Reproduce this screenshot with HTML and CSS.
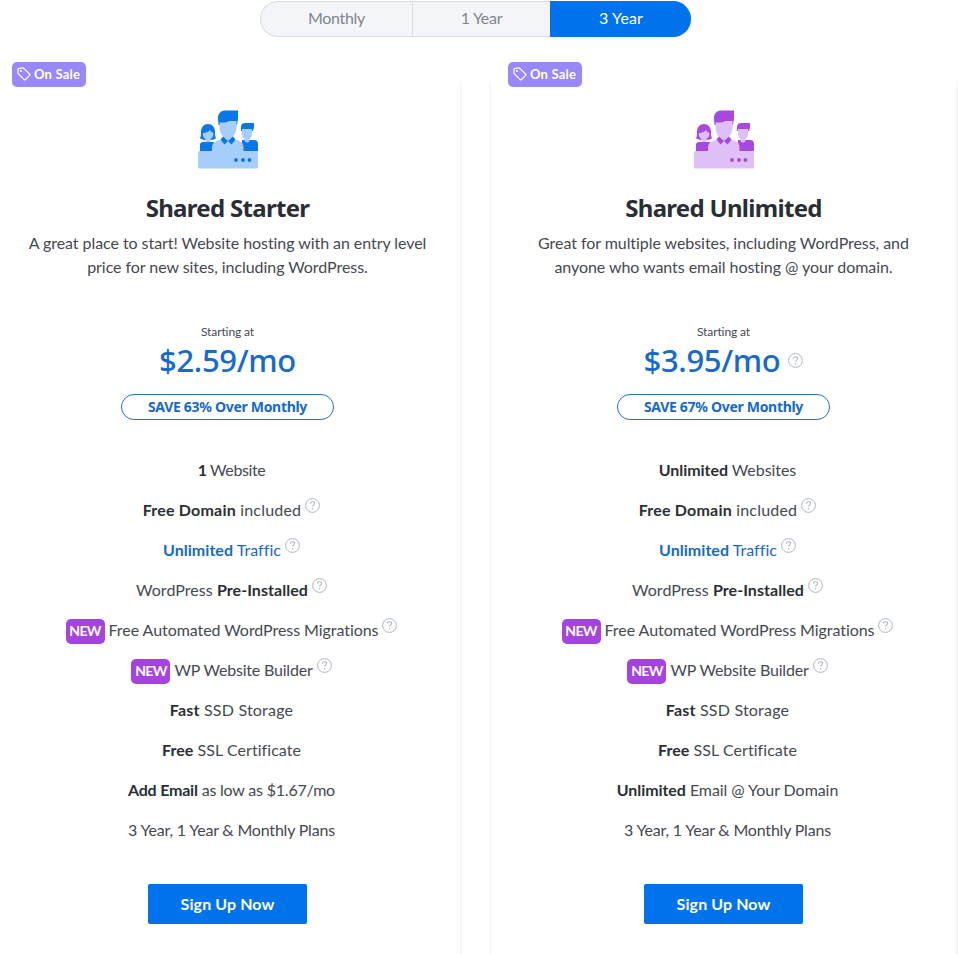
FILE: index.html
```html
<!DOCTYPE html>
<html lang="en">
<head>
    <meta charset="UTF-8">
    <meta name="viewport" content="width=device-width, initial-scale=1.0">
    <title>Shared Hosting Plans</title>
    <link rel="stylesheet" href="styles.css">
</head>
<body>

<!-- Shared icons -->
<svg class="sprite" xmlns="http://www.w3.org/2000/svg">
    <symbol id="help" viewBox="0 0 15 15">
        <circle cx="7.5" cy="7.5" r="6.9" fill="none" stroke="currentColor"/>
        <path d="M5.4 5.8c0-1.3.9-2 2.1-2s2.1.7 2.1 1.8c0 1.5-2 1.5-2 3.1" fill="none" stroke="currentColor" stroke-width="1.1"/>
        <circle cx="7.6" cy="10.8" r=".8" fill="currentColor"/>
    </symbol>
    <symbol id="tag" viewBox="0 0 14 14">
        <path d="M1.2 1.6 6.3.9l6.4 6.3a.9.9 0 0 1 0 1.2l-4.3 4.3a.9.9 0 0 1-1.2 0L.9 6.4z" fill="none" stroke="currentColor" stroke-width="1.2" stroke-linejoin="round"/>
        <circle cx="4" cy="4" r="1.1" fill="currentColor"/>
    </symbol>
    <symbol id="people" viewBox="0 0 60 59">
        <!-- woman -->
        <path class="dark" d="M2 28c1-1.500 1-4 1-6 0-5 3-8 7-8s7 3 7 8c0 2 0 4.500 1 6-1 1.500-4 2-8 2s-7-.5-8-2z"/>
        <path class="dark" d="M2 41v-6c0-2 1-3 3-3h11v9z"/>
        <path class="light" d="M5 23q5-.5 7-3 1 2.500 3.500 3c0 3-1 5-3 6v2q-2.500 2.500-5 0v-2c-2-1-3-3-2.500-6z"/>
        <!-- right man -->
        <path class="dark" d="M43 21v-4c0-2.500 1.500-4 4-4h9v4l-1 4z"/>
        <path class="dark" d="M44 30h12c2.500 0 4 1.500 4 4v7H44z"/>
        <path class="light" d="M44 19h10v4c0 3-1 5-2.500 6v2q-2.500 3-5 0v-2c-1.500-1-2.500-3-2.500-6z"/>
        <!-- front man -->
        <path class="light" d="M14 41v-3c0-5 3-7 8-8l8-1 8 1c5 1 7.500 3 7.500 8v3z"/>
        <path class="dark" d="M20.500 15 20 8c0-5 3-7.500 8-7.500h12V8l-1 7z"/>
        <path class="light" d="M21.500 12.500Q29 13 31 11h7.500v6c0 5-2 8-4 10v3q-4.500 4-9 0v-3c-2-2-4-5-4-10z"/>
        <path class="dark" d="m25 26.500 5 4.500-3.500 3.500-4-5zM35 26.500 30 31l3.500 3.500 4-5z"/>
        <!-- desk -->
        <rect class="light" y="41" width="60" height="17.500" rx="1.500"/>
        <circle class="dark" cx="38" cy="50" r="1.900"/>
        <circle class="dark" cx="45" cy="50" r="1.900"/>
        <circle class="dark" cx="51.500" cy="50" r="1.900"/>
    </symbol>
</svg>

<!-- Billing period -->
<div class="period">
    <button class="period-btn monthly">Monthly</button>
    <button class="period-btn one-year">1 Year</button>
    <button class="period-btn three-year active">3 Year</button>
</div>

<!-- Plans -->
<div class="plans">
    <div class="plan starter">
        <div class="sale"><svg><use href="#tag"/></svg><span>On Sale</span></div>
        <svg class="plan-icon"><use href="#people"/></svg>
        <h2>Shared Starter</h2>
        <p class="desc">A great place to start! Website hosting with an entry level<br>price for new sites, including WordPress.</p>
        <p class="starting">Starting at</p>
        <div class="price"><span>$2.59/mo</span></div>
        <div class="save">SAVE 63% Over Monthly</div>
        <ul class="features">
            <li class="tighter"><span><b>1</b> Website</span></li>
            <li class="loose"><span><b>Free Domain</b> included</span><svg class="help"><use href="#help"/></svg></li>
            <li><a href="#"><b>Unlimited</b> Traffic</a><svg class="help"><use href="#help"/></svg></li>
            <li><span>WordPress <b>Pre-Installed</b></span><svg class="help"><use href="#help"/></svg></li>
            <li class="snug"><em class="new">NEW</em><span>Free Automated WordPress Migrations</span><svg class="help"><use href="#help"/></svg></li>
            <li class="tight"><em class="new">NEW</em><span>WP Website Builder</span><svg class="help"><use href="#help"/></svg></li>
            <li class="loose"><span><b>Fast</b> SSD Storage</span></li>
            <li><span><b>Free</b> SSL Certificate</span></li>
            <li class="tight"><span><b>Add Email</b> as low as $1.67/mo</span></li>
            <li class="tight"><span>3 Year, 1 Year &amp; Monthly Plans</span></li>
        </ul>
        <button class="signup">Sign Up Now</button>
    </div>

    <div class="plan unlimited">
        <div class="sale"><svg><use href="#tag"/></svg><span>On Sale</span></div>
        <svg class="plan-icon"><use href="#people"/></svg>
        <h2>Shared Unlimited</h2>
        <p class="desc">Great for multiple websites, including WordPress, and<br>anyone who wants email hosting @ your domain.</p>
        <p class="starting">Starting at</p>
        <div class="price"><span>$3.95/mo</span><svg class="help"><use href="#help"/></svg></div>
        <div class="save">SAVE 67% Over Monthly</div>
        <ul class="features">
            <li class="snug"><span><b>Unlimited</b> Websites</span></li>
            <li class="loose"><span><b>Free Domain</b> included</span><svg class="help"><use href="#help"/></svg></li>
            <li><a href="#"><b>Unlimited</b> Traffic</a><svg class="help"><use href="#help"/></svg></li>
            <li><span>WordPress <b>Pre-Installed</b></span><svg class="help"><use href="#help"/></svg></li>
            <li class="snug"><em class="new">NEW</em><span>Free Automated WordPress Migrations</span><svg class="help"><use href="#help"/></svg></li>
            <li class="tight"><em class="new">NEW</em><span>WP Website Builder</span><svg class="help"><use href="#help"/></svg></li>
            <li class="loose"><span><b>Fast</b> SSD Storage</span></li>
            <li><span><b>Free</b> SSL Certificate</span></li>
            <li class="snug"><span><b>Unlimited</b> Email @ Your Domain</span></li>
            <li class="tight"><span>3 Year, 1 Year &amp; Monthly Plans</span></li>
        </ul>
        <button class="signup">Sign Up Now</button>
    </div>
</div>

</body>
</html>
```
FILE: styles.css
```css
* {
    box-sizing: border-box;
}

body {
    font-family: Lato, "Liberation Sans", sans-serif;
    font-size: 16px;
    line-height: 24px;
    margin: 0;
    padding-top: 1px;
    height: 954px;
    overflow: hidden;
    background-color: #fff;
    color: #44494f;
}

b {
    color: #2a2f35;
}

.sprite {
    display: none;
}

button {
    font-family: inherit;
    border: 0;
    padding: 0;
    cursor: pointer;
}

.period {
    display: flex;
    width: 431px;
    height: 36px;
    margin-left: 260px;
}

.period-btn {
    padding-bottom: 3px;
    font-size: 16px;
    letter-spacing: -0.3px;
    color: #81868b;
    background-color: #f4f5f9;
    border: 1px solid #d9dce1;
    border-right: 0;
}

.monthly {
    width: 152px;
    border-radius: 18px 0 0 18px;
}

.one-year {
    width: 138px;
}

.three-year {
    width: 141px;
    border-radius: 0 18px 18px 0;
}

.period-btn.active {
    background-color: #0073ec;
    border-color: #0073ec;
    color: #fff;
    letter-spacing: 0.1px;
}

.plans {
    display: flex;
    gap: 31px;
    margin: 38px 0 0 -5px;
}

.plan {
    position: relative;
    flex: none;
    width: 465px;
    height: 900px;
    padding-top: 35px;
    border-radius: 5px;
    box-shadow: 0 4px 3px rgba(0, 0, 0, 0.15);
    text-align: center;
    display: flex;
    flex-direction: column;
    align-items: center;
}

.sale {
    position: absolute;
    top: -13px;
    left: 17px;
    width: 74px;
    height: 25px;
    display: flex;
    align-items: center;
    gap: 3px;
    padding: 0 0 2px 5px;
    border-radius: 5px;
    background-color: #9888fa;
    color: #fff;
    font-size: 13px;
    font-weight: bold;
    letter-spacing: 0.2px;
    white-space: nowrap;
}

.sale svg {
    width: 14px;
    height: 14px;
}

.plan-icon {
    width: 60px;
    height: 59px;
}

.starter .plan-icon {
    --dark: #0877e7;
    --light: #a5cefa;
}

.unlimited .plan-icon {
    --dark: #a748df;
    --light: #dfbff7;
}

.dark {
    fill: var(--dark);
}

.light {
    fill: var(--light);
}

h2 {
    margin: 23px 0 0;
    font-family: "Noto Sans", sans-serif;
    font-size: 24px;
    line-height: 32px;
    font-weight: 700;
    letter-spacing: -0.7px;
    color: #292e34;
}

.desc {
    margin: 7px 0 0;
    white-space: nowrap;
    letter-spacing: -0.06px;
}

.starting {
    margin: 45px 0 0;
    font-size: 12px;
    line-height: 16px;
    letter-spacing: -0.1px;
}

.price {
    display: flex;
    align-items: center;
    gap: 8px;
    height: 40px;
    font-family: "Noto Sans", sans-serif;
    font-size: 31px;
    font-weight: 500;
    letter-spacing: -0.35px;
    color: #1569cf;
}

.save {
    width: 213px;
    height: 26px;
    margin-top: 14px;
    border: 1px solid #2871bd;
    border-radius: 13px;
    font-family: "Noto Sans", sans-serif;
    font-size: 14px;
    font-weight: 700;
    letter-spacing: -0.3px;
    color: #1569cf;
}

.features {
    list-style: none;
    margin: 38px 0 0;
    padding: 0 0 0 8px;
}

.features li {
    display: flex;
    justify-content: center;
    gap: 4px;
    height: 24px;
    margin-bottom: 16px;
    white-space: nowrap;
    letter-spacing: 0.05px;
}

.features .loose {
    letter-spacing: 0.2px;
}

.features .snug {
    letter-spacing: -0.06px;
}

.features .tight {
    letter-spacing: -0.2px;
}

.features .tighter {
    letter-spacing: -0.4px;
}

.features a,
.features a b {
    color: #1569cf;
    text-decoration: none;
}

.help {
    flex: none;
    width: 15px;
    height: 15px;
    color: #aeb6bd;
}

.new {
    flex: none;
    width: 39px;
    height: 25px;
    margin-top: 1px;
    border-radius: 5px;
    background-color: #a543e0;
    color: #fff;
    font-size: 14px;
    font-style: normal;
    font-weight: bold;
    letter-spacing: -0.7px;
}

.signup {
    width: 159px;
    height: 40px;
    margin-top: 26px;
    padding-bottom: 2px;
    border-radius: 2px;
    background-color: #0073ec;
    color: #fff;
    font-size: 16px;
    font-weight: bold;
    letter-spacing: 0.1px;
}
```
